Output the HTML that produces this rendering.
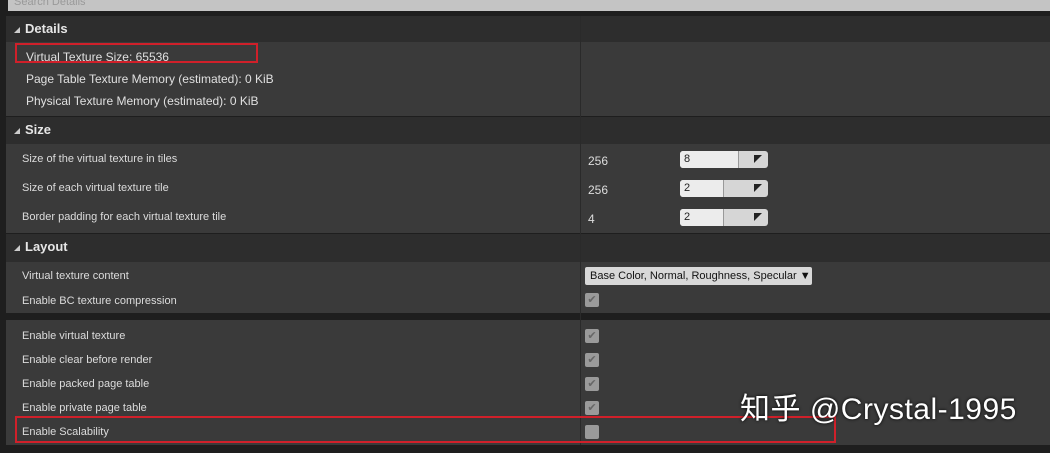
<!DOCTYPE html><html><head><style>
body{margin:0;width:1050px;height:453px;background:#1e1e1e;position:relative;overflow:hidden;font-family:"Liberation Sans",sans-serif;color:#d8d8d8}
div{position:absolute;box-sizing:border-box}
.hdr{left:6px;right:0;background:#2d2d2d;font-size:13px;font-weight:bold;color:#e6e6e6;padding-left:8px;line-height:25px}
.hdr:before{content:"";display:inline-block;width:0;height:0;border-left:6px solid transparent;border-bottom:6px solid #ccc;margin-right:5px;vertical-align:0}
.rows{left:6px;right:0;background:#3a3a3a}
.t{font-size:11px;left:22px;color:#dcdcdc}
.d{font-size:12px;left:26px;color:#e0e0e0}
.div{left:580px;width:1px;background:#2a2a2a}
.cb{left:585px;width:14px;height:14px;background:#9a9a9a;border-radius:2px;color:#666;font-size:11px;line-height:14px;text-align:center}
.sp{left:680px;width:88px;height:17px;background:#d6d6d6;border-radius:3px;font-size:11px;color:#222;padding-left:4px;line-height:16px}
.sp i{position:absolute;right:6px;top:4px;width:0;height:0;border:4px solid transparent;border-top-color:#222;border-left-color:#222}
.sp b{position:absolute;left:0;top:0;bottom:0;background:#ececec;border-right:1px solid #999;border-radius:3px 0 0 3px}
.n{left:588px;font-size:12px;color:#ddd}
.red{border:2px solid #d0202a}
</style></head><body>
<div style="left:8px;top:0;width:1042px;height:11px;background:#c4c4c4;font-size:11px;color:#999;line-height:0;padding-left:6px;overflow:hidden"><span style="position:relative;top:2px">Search Details</span></div>
<div class="hdr" style="top:16px;height:26px">Details</div>
<div class="rows" style="top:42px;height:74px"></div>
<div class="hdr" style="top:117px;height:27px">Size</div>
<div class="rows" style="top:144px;height:89px"></div>
<div class="hdr" style="top:234px;height:28px">Layout</div>
<div class="rows" style="top:262px;height:51px"></div>
<div class="rows" style="top:320px;height:125px"></div>
<div class="div" style="top:16px;height:429px"></div>

<div class="d" style="top:50px">Virtual Texture Size: 65536</div>
<div class="d" style="top:72px">Page Table Texture Memory (estimated): 0 KiB</div>
<div class="d" style="top:94px">Physical Texture Memory (estimated): 0 KiB</div>
<div class="red" style="left:15px;top:43px;width:243px;height:20px"></div>

<div class="t" style="top:153px">Size of the virtual texture in tiles</div>
<div class="t" style="top:182px">Size of each virtual texture tile</div>
<div class="t" style="top:211px">Border padding for each virtual texture tile</div>
<div class="n" style="top:154px">256</div><div class="n" style="top:183px">256</div><div class="n" style="top:212px">4</div>
<div class="sp" style="top:151px"><b style="width:58px"></b><span style="position:relative">8</span><i></i></div>
<div class="sp" style="top:180px"><b style="width:43px"></b><span style="position:relative">2</span><i></i></div>
<div class="sp" style="top:209px"><b style="width:43px"></b><span style="position:relative">2</span><i></i></div>

<div class="t" style="top:270px">Virtual texture content</div>
<div class="t" style="top:295px">Enable BC texture compression</div>
<div style="left:585px;top:267px;width:227px;height:18px;background:#d8d8d8;border-radius:2px;font-size:11px;color:#111;line-height:18px;padding-left:5px">Base Color, Normal, Roughness, Specular &#9660;</div>
<div class="cb" style="top:293px">&#10004;</div>

<div class="t" style="top:330px">Enable virtual texture</div>
<div class="t" style="top:354px">Enable clear before render</div>
<div class="t" style="top:378px">Enable packed page table</div>
<div class="t" style="top:402px">Enable private page table</div>
<div class="t" style="top:426px">Enable Scalability</div>
<div class="cb" style="top:329px">&#10004;</div><div class="cb" style="top:353px">&#10004;</div>
<div class="cb" style="top:377px">&#10004;</div><div class="cb" style="top:401px">&#10004;</div>
<div class="cb" style="top:425px"></div>
<div class="red" style="left:15px;top:416px;width:821px;height:27px"></div>
<div style="left:740px;top:384px;font-size:30px;color:#fff;font-family:'Liberation Sans','Noto Sans CJK SC',sans-serif;text-shadow:0 0 3px #000;letter-spacing:0.5px">知乎 @Crystal-1995</div>
</body></html>
